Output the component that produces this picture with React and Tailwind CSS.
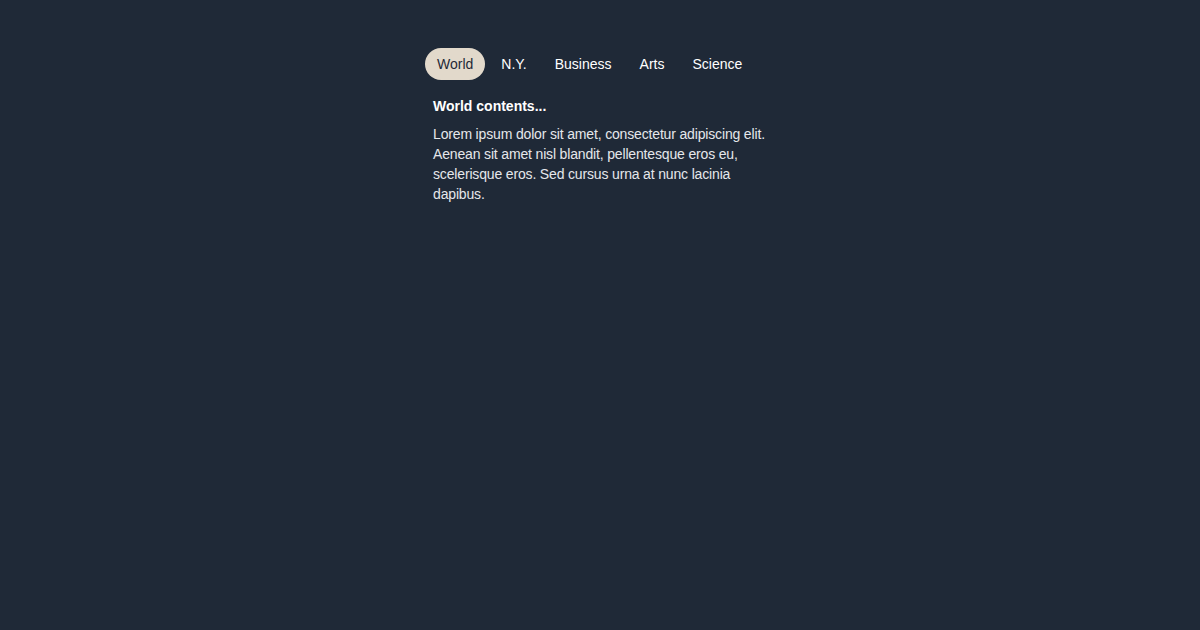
import { useState } from 'react';

const categories = [
  { name: 'World', title: 'World contents...' },
  { name: 'N.Y.', title: 'N.Y. contents...' },
  { name: 'Business', title: 'Business contents...' },
  { name: 'Arts', title: 'Arts contents...' },
  { name: 'Science', title: 'Science contents...' },
];

const body =
  'Lorem ipsum dolor sit amet, consectetur adipiscing elit. Aenean sit amet nisl blandit, pellentesque eros eu, scelerisque eros. Sed cursus urna at nunc lacinia dapibus.';

export default function App() {
  const [selected, setSelected] = useState(0);
  const current = categories[selected];

  return (
    <div
      className="min-h-screen w-full bg-[#1f2937] pt-12"
      style={{ fontFamily: '"Liberation Sans", Arial, sans-serif' }}
    >
      <div className="mx-auto w-[350px]">
        {/* Tabs */}
        <div className="flex gap-1">
          {categories.map((cat, idx) => (
            <button
              key={cat.name}
              onClick={() => setSelected(idx)}
              className={`rounded-full px-3 py-1.5 text-sm leading-5 focus:outline-none ${
                idx === selected
                  ? 'bg-[#e2d9cb] text-[#1f2937]'
                  : 'text-white hover:bg-white/5'
              }`}
            >
              {cat.name}
            </button>
          ))}
        </div>

        {/* Panel */}
        <div className="mt-4 px-2">
          <h3 className="text-sm font-bold leading-5 text-white">{current.title}</h3>
          <p className="mt-2 text-sm leading-5 tracking-[-0.16px] text-[#e5e7eb]">{body}</p>
        </div>
      </div>
    </div>
  );
}
